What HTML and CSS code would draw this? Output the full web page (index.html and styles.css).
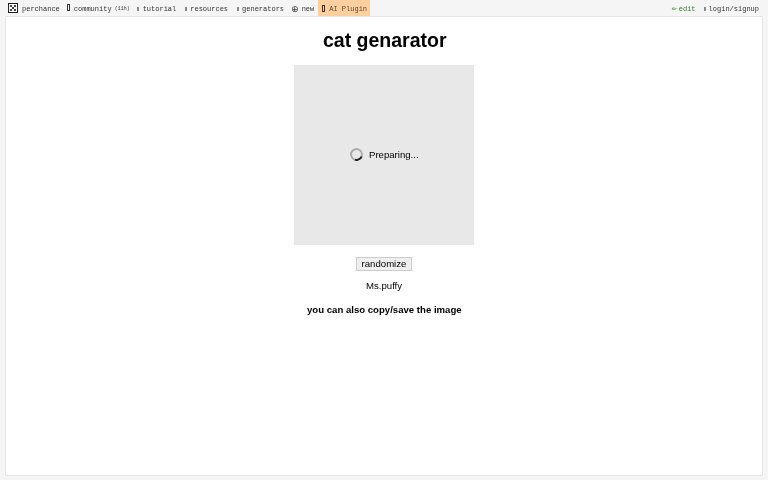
FILE: index.html
```html
<!DOCTYPE html>
<html lang="en">

<head>
  <meta charset="UTF-8" />
  <meta name="viewport" content="width=device-width, initial-scale=1" />
  <title>cat genarator</title>
  <link rel="stylesheet" href="styles.css">
</head>

<body>
  <div class="topbar">
    <div class="nav-left">
      <a class="nav-item nav-home"><svg class="dice" width="10" height="10" viewBox="0 0 10 10"><rect x="0.5" y="0.5" width="9" height="9" fill="#fff" stroke="#222" /><rect x="2" y="2" width="2" height="2" fill="#444" /><rect x="6" y="2" width="2" height="2" fill="#444" /><rect x="4" y="4" width="2" height="2" fill="#444" /><rect x="2" y="6" width="2" height="2" fill="#444" /><rect x="6" y="6" width="2" height="2" fill="#444" /></svg>perchance</a>
      <a class="nav-item nav-community"><span class="tofu tofu-big"></span>community<small>(11h)</small></a>
      <a class="nav-item nav-tutorial"><span class="tofu"></span>tutorial</a>
      <a class="nav-item nav-resources"><span class="tofu"></span>resources</a>
      <a class="nav-item nav-generators"><span class="tofu"></span>generators</a>
      <a class="nav-item nav-new"><span class="globe">⊕</span>new</a>
      <a class="nav-item nav-plugin"><span class="tofu tofu-big"></span>AI Plugin</a>
    </div>
    <div class="nav-right">
      <a class="nav-item nav-edit"><span class="pencil">✏</span>edit</a>
      <a class="nav-item nav-login"><span class="tofu"></span>login/signup</a>
    </div>
  </div>

  <div class="page">
    <h1>cat genarator</h1>
    <div class="image-box">
      <div class="spinner"></div>
      <span>Preparing...</span>
    </div>
    <button class="randomize">randomize</button>
    <p class="name">Ms.puffy</p>
    <p class="note">you can also copy/save the image</p>
  </div>
</body>

</html>
```

FILE: styles.css
```css
* {
  box-sizing: border-box;
}

html,
body {
  height: 100%;
}

body {
  margin: 0;
  background: #f5f5f5;
  color: #000;
  font-family: "Liberation Sans", Arial, sans-serif;
  display: flex;
  flex-direction: column;
  overflow: hidden;
}

.topbar {
  height: 16px;
  display: flex;
  justify-content: space-between;
  font-family: "Liberation Mono", monospace;
  font-size: 7px;
  color: #333;
  will-change: transform;
}

.nav-left,
.nav-right {
  display: flex;
}

.nav-item {
  display: flex;
  align-items: center;
  white-space: nowrap;
  padding-top: 1px;
}

.nav-home {
  padding-left: 8px;
}

.dice {
  margin-top: -2px;
  margin-right: 4px;
}

.nav-community {
  margin-left: 7px;
}

.nav-community small {
  font-size: 5px;
  margin-left: 3px;
}

.nav-tutorial {
  margin-left: 7px;
}

.nav-tutorial .tofu {
  margin-right: 4px;
}

.nav-resources,
.nav-generators {
  margin-left: 9px;
}

.nav-new {
  margin-left: 7px;
}

.globe {
  font-family: "DejaVu Sans", sans-serif;
  font-size: 9px;
  margin-right: 3px;
}

.nav-plugin {
  margin-left: 4px;
  padding: 2px 3px 0 4px;
  background: #ffcf9f;
  color: #5a4a30;
}

.tofu {
  display: inline-block;
  width: 2px;
  height: 4px;
  border: 1px solid #888;
  margin-right: 3px;
}

.tofu-big {
  width: 3px;
  height: 7px;
  margin-top: -2px;
  border-color: #333;
  margin-right: 4px;
}

.pencil {
  font-family: "DejaVu Sans", sans-serif;
  font-size: 6px;
  margin-right: 2px;
}

.nav-edit {
  color: #2a7a2a;
  margin-right: 8px;
}

.nav-login {
  margin-right: 9px;
}

.page {
  flex: 1;
  margin: 0 5px 4px;
  background: #fff;
  border: 1px solid #e6e6e6;
  display: flex;
  flex-direction: column;
  align-items: center;
}

h1,
.image-box span,
.randomize,
.name,
.note {
  will-change: transform;
}

h1 {
  margin: 12px 0 14px 1px;
  font-size: 19.5px;
  line-height: 22px;
}

.image-box {
  width: 180px;
  height: 180px;
  padding-bottom: 1px;
  background: #e8e8e8;
  display: flex;
  align-items: center;
  justify-content: center;
  gap: 6px;
  font-size: 9.6px;
}

.spinner {
  width: 13px;
  height: 13px;
  border-radius: 50%;
  border: 2px solid #aaa;
  border-bottom-color: #222;
  transform: rotate(-25deg);
}

.randomize {
  margin-top: 12px;
  height: 14px;
  width: 56px;
  padding: 0;
  font-family: inherit;
  font-size: 9.6px;
  line-height: 12px;
  background: #efefef;
  border: 1px solid #ccc;
  color: #000;
}

.name {
  margin: 9px 0 0;
  font-size: 9.6px;
  line-height: 12px;
}

.note {
  margin: 12px 0 0;
  font-size: 9.6px;
  line-height: 12px;
  font-weight: bold;
}
```
